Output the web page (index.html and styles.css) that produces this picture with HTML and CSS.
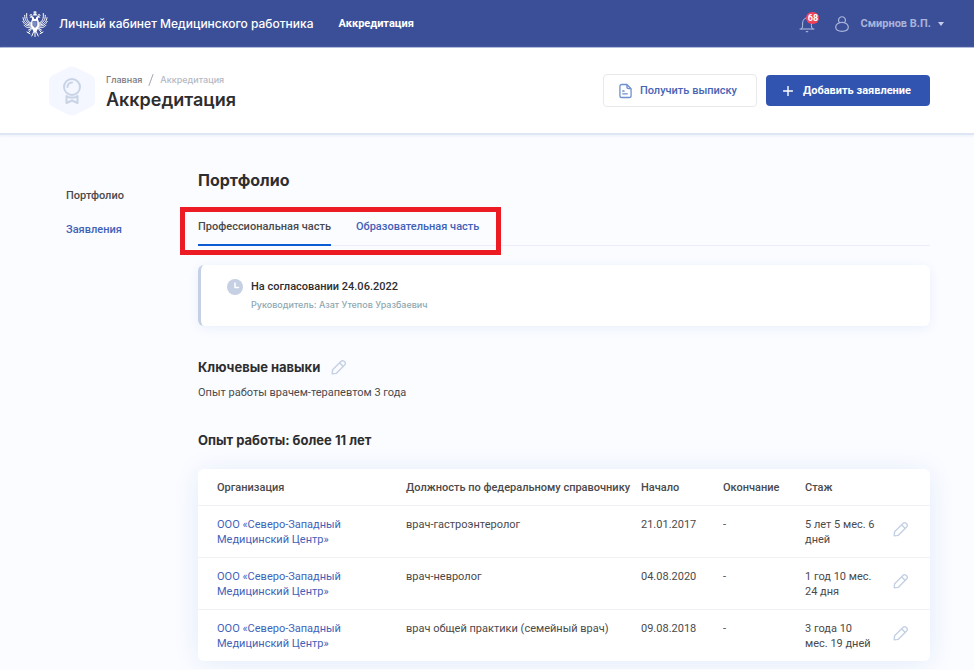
FILE: index.html
```html
<!DOCTYPE html>
<html lang="ru">
<head>
    <meta charset="UTF-8">
    <meta name="viewport" content="width=device-width, initial-scale=1.0">
    <title>Аккредитация</title>
    <link rel="stylesheet" href="styles.css">
</head>

<body>
    <!-- Иконки -->
    <svg class="sprite" aria-hidden="true">
        <symbol id="pencil" viewBox="0 0 16 16">
            <path d="M1.200 14.800l.4-4 8.600-8.600a1.900 1.900 0 0 1 2.700 0l.9.9a1.900 1.900 0 0 1 0 2.700l-8.600 8.600zM8.600 3.800l3.600 3.600"/>
        </symbol>
    </svg>

    <!-- Верхняя панель -->
    <header class="topbar">
        <svg class="emblem" viewBox="0 0 26 26" aria-hidden="true">
            <path d="M13 0v3M11.8 1.2h2.4M8 4.6l1-1.4 1 1.4M16 4.6l1-1.4 1 1.4"/>
            <path class="solid" d="M11.5 2.6h3l.4 2h-3.8zM10.4 5.2c1.200 .4 1.700 1.300 1.800 2.800h1.600c.1-1.500.6-2.400 1.800-2.800 1.200-.4 2.400 .2 2.800 1.600l-1.800-.2c-1 .6-.8 2 .2 3.600l.4 5-2.200 4.400L13 22l-2-2.400-2.200-4.400.4-5c1-1.600 1.200-3 .2-3.600l-1.800.2c.4-1.400 1.600-2 2.800-1.600z"/>
            <path d="M9 12C5.600 11 4.200 7.500 4.700 2.500M8.800 13C4.500 12 2.500 8.500 2.700 4.300M8.700 14C4 13.700 1.500 10.500 1 6.700M8.900 15C5 15.400 2.300 13.500 .8 10.400M9.200 16C6.500 17.300 4 16.700 2 14.200M9.700 17L6.500 19M17 12c3.400-1 4.800-4.500 4.300-9.500M17.200 13c4.300-1 6.300-4.500 6.100-8.700M17.300 14c4.700-.3 7.200-3.500 7.700-7.300M17.100 15c3.900 .4 6.600-1.500 8.100-4.600M16.800 16c2.700 1.300 5.200 .7 7.200-1.800M16.300 17l3.200 2"/>
            <path d="M9.800 17.500l-3.300 4.200M5 21l3 1.800M16.200 17.500l3.300 4.200M21 21l-3 1.800M13 20v5.500M11.800 20.500L9.800 25M14.200 20.500l2 4.500"/>
            <path class="shield" d="M11.100 10.500h3.800v4.200L13 16.500l-1.900-1.800z"/>
        </svg>
        <span class="brand">Личный кабинет Медицинского работника</span>
        <nav class="topnav">
            <a href="#">Аккредитация</a>
        </nav>
        <button class="bell" type="button" aria-label="Уведомления">
            <svg viewBox="0 0 16 18" aria-hidden="true">
                <path d="M1 14h14M2.500 14c1-1.300 1.100-2.500 1.100-5C3.600 5.500 5 3 8 3s4.400 2.500 4.400 6c0 2.500.1 3.700 1.100 5M7.200 16.700h1.600"/>
            </svg>
            <span class="badge">68</span>
        </button>
        <button class="user" type="button">
            <svg class="user-icon" viewBox="0 0 14 16" aria-hidden="true">
                <path d="M4.600 6.800a3.500 3.500 0 1 1 4.800 0C11.800 7.600 13.300 9.200 13.300 11.300c0 2.600-2.600 4-6.300 4s-6.300-1.400-6.300-4c0-2.100 1.500-3.700 3.900-4.500q2.400-.9 4.800 0"/>
            </svg>
            <span>Смирнов В.П.</span>
            <span class="caret"></span>
        </button>
    </header>

    <!-- Заголовок страницы -->
    <div class="page-head">
        <svg class="hexagon" viewBox="0 0 46 50" aria-hidden="true">
            <path class="hex" d="M19 1.500q4-2 8 0l15 7.500q4 2 4 6v20q0 4-4 6l-15 7.500q-4 2-8 0L4 41q-4-2-4-6V15q0-4 4-6z"/>
            <circle cx="23" cy="21" r="8"/>
            <path d="M18.500 21a4.500 4.500 0 0 1 4.500-4.500M17.500 30v7l5.500-2.500 5.500 2.500v-7M17.500 30l2.500 1.500h6l2.500-1.500"/>
        </svg>
        <div class="titles">
            <nav class="crumbs">
                <a href="#">Главная</a>
                <svg class="slash" viewBox="0 0 6 12" aria-hidden="true"><path d="M1 11.500L5 .5"/></svg>
                <span>Аккредитация</span>
            </nav>
            <h1>Аккредитация</h1>
        </div>
        <div class="actions">
            <button class="btn btn-light" type="button">
                <svg viewBox="0 0 14 16" aria-hidden="true">
                    <path d="M8.500 1H3a2 2 0 0 0-2 2v10a2 2 0 0 0 2 2h8a2 2 0 0 0 2-2V5.500zM8.500 1v2.500a2 2 0 0 0 2 2H13M4 8h1.500M4 11h5"/>
                </svg>
                Получить выписку
            </button>
            <button class="btn btn-primary" type="button">
                <svg viewBox="0 0 10 10" aria-hidden="true"><path d="M5 .5v9M.5 5h9"/></svg>
                Добавить заявление
            </button>
        </div>
    </div>

    <div class="layout">
        <!-- Боковое меню -->
        <nav class="sidebar">
            <a class="current" href="#">Портфолио</a>
            <a href="#">Заявления</a>
        </nav>

        <main class="content">
            <h2>Портфолио</h2>

            <div class="tabs">
                <a class="tab active" href="#">Профессиональная часть</a>
                <a class="tab" href="#">Образовательная часть</a>
                <span class="marker"></span>
            </div>

            <!-- Статус согласования -->
            <section class="status">
                <svg class="clock" viewBox="0 0 16 16" aria-hidden="true">
                    <circle cx="8" cy="8" r="8"/>
                    <path d="M8 4v4.500h3.500"/>
                </svg>
                <div>
                    <p class="status-title">На согласовании 24.06.2022</p>
                    <p class="status-note">Руководитель: Азат Утепов Уразбаевич</p>
                </div>
            </section>

            <section class="skills">
                <div class="skills-head">
                    <h3>Ключевые навыки</h3>
                    <button class="edit" type="button" aria-label="Изменить"><svg><use href="#pencil"/></svg></button>
                </div>
                <p>Опыт работы врачем-терапевтом 3 года</p>
            </section>

            <h3>Опыт работы: более 11 лет</h3>
            <table class="jobs">
                <thead>
                    <tr>
                        <th class="col-org">Организация</th>
                        <th>Должность по федеральному справочнику</th>
                        <th class="col-date">Начало</th>
                        <th class="col-date">Окончание</th>
                        <th class="col-date">Стаж</th>
                        <th class="col-edit"></th>
                    </tr>
                </thead>
                <tbody>
                    <tr>
                        <td><a href="#">ООО «Северо-Западный<br>Медицинский Центр»</a></td>
                        <td>врач-гастроэнтеролог</td>
                        <td>21.01.2017</td>
                        <td>-</td>
                        <td>5 лет 5 мес. 6<br>дней</td>
                        <td><button class="edit" type="button" aria-label="Изменить"><svg><use href="#pencil"/></svg></button></td>
                    </tr>
                    <tr>
                        <td><a href="#">ООО «Северо-Западный<br>Медицинский Центр»</a></td>
                        <td>врач-невролог</td>
                        <td>04.08.2020</td>
                        <td>-</td>
                        <td>1 год 10 мес.<br>24 дня</td>
                        <td><button class="edit" type="button" aria-label="Изменить"><svg><use href="#pencil"/></svg></button></td>
                    </tr>
                    <tr>
                        <td><a href="#">ООО «Северо-Западный<br>Медицинский Центр»</a></td>
                        <td>врач общей практики (семейный врач)</td>
                        <td>09.08.2018</td>
                        <td>-</td>
                        <td>3 года 10<br>мес. 19 дней</td>
                        <td><button class="edit" type="button" aria-label="Изменить"><svg><use href="#pencil"/></svg></button></td>
                    </tr>
                </tbody>
            </table>
        </main>
    </div>
</body>

</html>
```

FILE: styles.css
```css
:root {
    --blue: #3b4f98;
    --link: #3f62b8;
    --text: #4a4a4c;
    --dark: #2e2e30;
    --pale: #c5d0e4;
}

* {
    box-sizing: border-box;
}

body {
    margin: 0;
    background: #fbfcff;
    color: var(--text);
    font-family: Roboto, "Liberation Sans", sans-serif;
    font-size: 11px;
    line-height: 15px;
}

h1, h2, h3, p {
    margin: 0;
}

h1, h2, h3 {
    color: var(--dark);
    font-family: Inter, "Liberation Sans", sans-serif;
    font-weight: 600;
}

a {
    color: var(--link);
    text-decoration: none;
}

button {
    padding: 0;
    border: none;
    background: none;
    font: inherit;
    cursor: pointer;
}

svg {
    display: block;
    flex: none;
    fill: none;
    stroke: currentColor;
    stroke-linecap: round;
    stroke-linejoin: round;
}

.sprite {
    display: none;
}

/* Верхняя панель */
.topbar {
    display: flex;
    align-items: center;
    height: 48px;
    padding: 0 30px 0 22px;
    border-bottom: 1px solid #a5b0d6;
    background: var(--blue);
    color: #fff;
}

.emblem {
    width: 26px;
    height: 26px;
    stroke-width: 1;
}

.emblem .solid {
    fill: #fff;
    stroke: none;
}

.emblem .shield {
    fill: #7e8cbd;
    stroke: var(--blue);
    stroke-width: .6;
}

.brand {
    margin-left: 11px;
    font-family: Inter, "Liberation Sans", sans-serif;
    font-size: 12px;
    font-weight: 500;
}

.topnav {
    margin: 0 auto 0 25px;
}

.topnav a {
    color: #fff;
    font-weight: 700;
}

.bell {
    position: relative;
    margin-right: 20px;
    color: #b9c3e2;
}

.bell svg {
    width: 16px;
    height: 18px;
}

.badge {
    position: absolute;
    top: -3px;
    right: -4px;
    width: 13px;
    height: 12px;
    border-radius: 6px;
    background: #f0435a;
    color: #fff;
    font-size: 9px;
    font-weight: 700;
    line-height: 12px;
}

.user {
    display: flex;
    align-items: center;
    color: #a9b4da;
    font-weight: 700;
}

.user-icon {
    width: 14px;
    height: 16px;
    margin-right: 11px;
    stroke-width: 1.2;
}

.caret {
    margin-left: 7px;
    border: 3px solid transparent;
    border-top: 4px solid #c5cde8;
    border-bottom: 0;
}

/* Заголовок страницы */
.page-head {
    display: flex;
    align-items: center;
    height: 87px;
    padding: 0 44px 0 49px;
    border-bottom: 2px solid #dfe6f3;
    background: #fff;
    box-shadow: 0 1px 3px #e9eff9;
}

.hexagon {
    width: 46px;
    height: 50px;
    color: #c8d3e6;
    stroke-width: 2;
}

.hexagon .hex {
    fill: #f4f7ff;
    stroke: none;
}

.titles {
    padding-top: 4px;
    margin-left: 11px;
}

.crumbs {
    display: flex;
    align-items: center;
    font-family: Inter, "Liberation Sans", sans-serif;
    font-size: 9px;
    font-weight: 500;
    color: #b4b8c4;
}

.crumbs a {
    color: #77777f;
}

.slash {
    width: 6px;
    height: 12px;
    margin: 0 6px;
    color: #a3a5b1;
}

h1 {
    font-size: 18px;
    line-height: 26px;
}

.actions {
    display: flex;
    align-items: center;
    gap: 9px;
    margin-left: auto;
}

.btn {
    display: flex;
    align-items: center;
    height: 31px;
    padding: 0 19px 0 17px;
    border-radius: 4px;
}

.btn-light {
    height: 33px;
    padding-left: 15px;
    border: 1px solid #e9e9ed;
    background: #fff;
    color: #4865b4;
    font-weight: 500;
}

.btn-light svg {
    width: 13px;
    height: 16px;
    margin-right: 8px;
    color: #6f8fd0;
    stroke-width: 1.400;
}

.btn-primary {
    background: #3054b0;
    color: #fff;
    font-weight: 700;
}

.btn-primary svg {
    width: 10px;
    height: 10px;
    margin-right: 10px;
    stroke-width: 1.400;
}

/* Основная часть */
.layout {
    display: grid;
    grid-template-columns: 132px 1fr;
    padding: 33px 44px 8px 66px;
}

.sidebar {
    display: flex;
    flex-direction: column;
    gap: 19px;
    padding-top: 20px;
    font-weight: 500;
}

.sidebar .current {
    color: var(--text);
}

h2 {
    font-size: 16px;
    font-weight: 700;
    line-height: 24px;
}

.tabs {
    position: relative;
    display: flex;
    gap: 25px;
    margin-top: 20px;
    border-bottom: 1px solid #e9eef9;
}

.tab {
    padding: 7px 0 10px;
    font-weight: 500;
    border-bottom: 2px solid transparent;
    margin-bottom: -1px;
}

.tab.active {
    color: var(--text);
    border-color: #0b5bd3;
}

/* Красная рамка вокруг вкладок */
.marker {
    position: absolute;
    top: -5px;
    left: -18px;
    width: 321px;
    height: 48px;
    border: 5px solid #ed1c24;
    pointer-events: none;
}

.status {
    display: flex;
    gap: 8px;
    margin-top: 19px;
    padding: 14px 26px;
    border-left: 3px solid var(--pale);
    border-radius: 6px;
    background: #fff;
    box-shadow: 0 2px 12px #e8effb;
}

.clock {
    width: 16px;
    height: 16px;
    fill: var(--pale);
    stroke: none;
}

.clock path {
    fill: none;
    stroke: #fff;
    stroke-width: 1.500;
}

.status-title {
    color: var(--dark);
    font-weight: 500;
}

.status-note {
    margin-top: 3px;
    color: #8ca8b2;
    font-family: Inter, "Liberation Sans", sans-serif;
    font-size: 9px;
    font-weight: 500;
}

h3 {
    font-size: 13px;
    font-weight: 700;
    line-height: 20px;
}

.skills {
    margin: 31px 0 30px;
}

.skills-head {
    display: flex;
    align-items: center;
    gap: 11px;
    margin-bottom: 8px;
}

.edit {
    display: block;
    color: var(--pale);
}

.edit svg {
    width: 16px;
    height: 16px;
    stroke-width: 1.400;
}

/* Таблица опыта работы */
.jobs {
    width: 100%;
    margin-top: 19px;
    table-layout: fixed;
    border-spacing: 0;
    border-radius: 6px;
    background: #fff;
    box-shadow: 0 2px 28px #e2ebfa;
}

.jobs th, .jobs td {
    padding: 11px 0 10px;
    text-align: left;
    vertical-align: top;
}

.jobs th {
    font-weight: 500;
    white-space: nowrap;
}

.jobs td {
    border-top: 1px solid #f0f1f4;
}

.jobs th:first-child, .jobs td:first-child {
    padding-left: 19px;
}

.jobs td:last-child {
    padding: 15px 0 0 6px;
}

.col-org {
    width: 208px;
}

.col-date {
    width: 82px;
}

.col-edit {
    width: 43px;
}
```
